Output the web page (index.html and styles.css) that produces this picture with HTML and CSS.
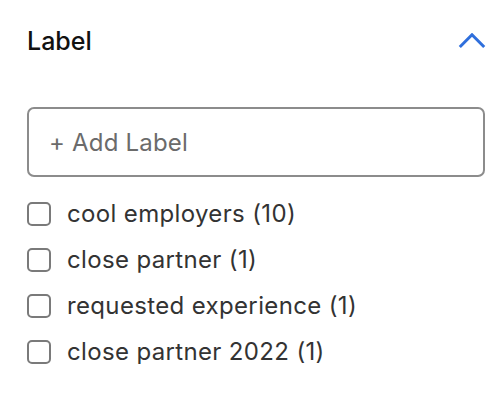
FILE: index.html
```html
<!DOCTYPE html>
<html>
<head>
<meta charset="utf-8">
<link rel="stylesheet" href="styles.css">
</head>
<body>
<section class="panel">
  <div class="header">
    <h2 class="title">Label</h2>
    <button class="toggle" aria-label="Collapse">
      <svg width="28" height="16" viewBox="0 0 28 16"><polyline points="1.8,14 14,1.8 26.2,14" fill="none" stroke="#2f6fdc" stroke-width="3" stroke-linecap="butt"/></svg>
    </button>
  </div>
  <div class="add-input">+ Add Label</div>
  <ul class="options">
    <li class="option"><span class="box"></span><span class="text">cool employers (10)</span></li>
    <li class="option"><span class="box"></span><span class="text">close partner (1)</span></li>
    <li class="option"><span class="box"></span><span class="text">requested experience (1)</span></li>
    <li class="option"><span class="box"></span><span class="text">close partner 2022 (1)</span></li>
  </ul>
</section>
</body>
</html>
```

FILE: styles.css
```css
html, body {
  margin: 0;
  padding: 0;
  background: #ffffff;
}
body {
  font-family: Inter, "Liberation Sans", sans-serif;
}
.panel {
  padding: 24px 19px 0 27px;
}
.header {
  display: flex;
  align-items: center;
  justify-content: space-between;
  height: 34px;
}
.title {
  margin: 0;
  font-size: 25px;
  font-weight: 500;
  color: #111111;
  line-height: 34px;
}
.toggle {
  border: 0;
  background: none;
  padding: 0;
  margin-right: -1px;
  display: flex;
}
.add-input {
  margin-top: 49px;
  height: 70px;
  box-sizing: border-box;
  border: 2px solid #8c8c8c;
  border-radius: 7px;
  padding: 0 20px;
  display: flex;
  align-items: center;
  font-size: 24px;
  letter-spacing: 0.2px;
  color: #6b6b6b;
}
.options {
  list-style: none;
  margin: 25px 0 0;
  padding: 0;
  display: flex;
  flex-direction: column;
  gap: 22px;
}
.option {
  display: flex;
  align-items: center;
  gap: 16px;
  height: 24px;
}
.box {
  width: 24px;
  height: 24px;
  box-sizing: border-box;
  border: 2px solid #7a7a7a;
  border-radius: 5px;
  flex: none;
}
.text {
  font-size: 24px;
  letter-spacing: 0.35px;
  color: #333333;
  line-height: 24px;
}
```
